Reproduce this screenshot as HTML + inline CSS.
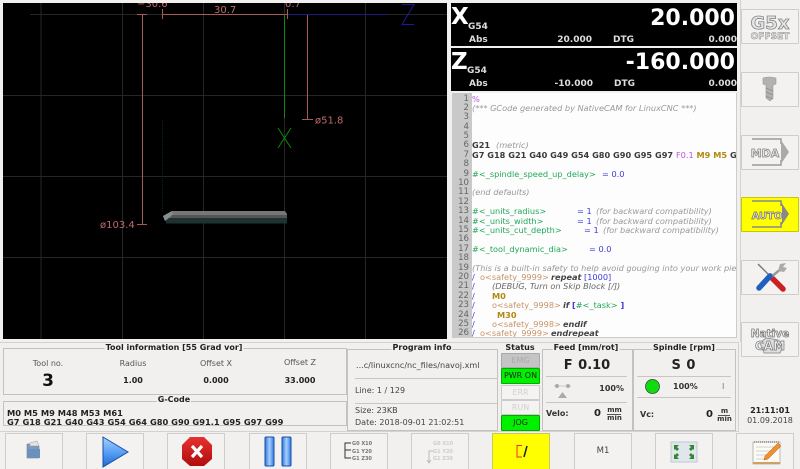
<!DOCTYPE html>
<html><head><meta charset="utf-8"><style>
html,body{margin:0;padding:0}
html{background:#f1f0ef}
body{width:800px;height:469px;overflow:hidden;background:#f1f0ef;position:relative;font-family:"DejaVu Sans","Liberation Sans",sans-serif;color:#222;filter:blur(.3px)}
div,span.a{position:absolute;white-space:nowrap}
.t{line-height:12px;height:12px}
.c{text-align:center}
.r{text-align:right}
.b{font-weight:bold}
.fr{border:1px solid #c4c2c0;box-sizing:border-box}
.ti{background:#f1f0ef;font-weight:bold;font-size:8px;line-height:10px;height:10px;padding:0 1px;color:#222;transform:translateX(-50%)}
.sep{height:1px;background:#c8c6c4}
.btn{border:1px solid #cfcdcb;box-sizing:border-box;background:#f3f2f1;top:433px;width:58px;height:36px;border-bottom:none}
.sb{border:1px solid #cfcdcb;box-sizing:border-box;background:#f3f2f1;left:741px;width:58px;height:35px;border-radius:1px}
.st{left:501px;width:39px;height:15px;box-sizing:border-box;border:1px solid #ccc;background:#f4f3f2;font-size:8px;line-height:14px;text-align:center;color:#d0d0d0;border-radius:1px}
.dro{left:451px;width:286px;height:43px;background:#000;color:#fff}
.dl{font-weight:bold;font-size:9px;line-height:12px;color:#ddd}
.big{font-weight:bold;font-size:22px;line-height:28px}
.l{left:0;width:288px;height:10px;line-height:9.4px;font-size:8.2px;color:#555}
.n{left:-20px;width:17px;text-align:right;color:#666;line-height:9.4px;display:block;position:absolute;font-size:8.6px}
.cm{color:#999;font-style:italic}
.gr{color:#22a85a}
.bl{color:#3c3cd8}
.bd{color:#3a3a3a;font-weight:bold}
.mg{color:#c050e8}
.gd{color:#b08a10;font-weight:bold}
.ta{color:#c89468}
.kw{color:#444;font-weight:bold;font-style:italic}
svg{position:absolute;left:0;top:0;overflow:visible}
</style></head><body>

<div style="left:740px;top:0;width:1px;height:342px;background:#d4d2d0"></div>
<div style="left:0;top:342px;width:739px;height:1px;background:#d4d2d0"></div>
<div style="left:738px;top:342px;width:1px;height:90px;background:#d4d2d0"></div>
<div style="left:0;top:431px;width:739px;height:1px;background:#d4d2d0"></div>

<div style="left:3px;top:3px;width:444px;height:336px;background:#000;overflow:hidden">
<svg width="444" height="336" viewBox="3 3 444 336">
<g stroke="#262626" stroke-width="1" fill="none">
<path d="M41 3V339M122.500 3V339M203.500 3V339M284.500 3V339M365.500 3V339"/>
<path d="M3 95.500H447M3 176.500H447M3 257.500H447M30 14.500H447"/>
</g>
<g stroke="#a65a5a" stroke-width="1" fill="none">
<path d="M142.500 14V224M137 14.500H147M137 224.500H147"/>
<path d="M162.500 9V19M162 14.500H287M287.500 9V19"/>
<path d="M307.500 14V119M302 14.500H313M302 119.500H313"/>
</g>
<g fill="#c06a6a" font-family="'DejaVu Sans',sans-serif" font-size="10">
<text x="214" y="13">30.7</text>
<text x="137" y="7">−30.6</text>
<text x="285" y="7">0.7</text>
<text x="315" y="123.500">ø51.8</text>
<text x="100" y="228">ø103.4</text>
</g>
<path d="M284.500 14V118" stroke="#0c8a0c" stroke-width="1"/>
<path d="M288 14.500H387" stroke="#1a1a80" stroke-width="1"/>
<path d="M402 4.500H414L402 24.500H414" stroke="#1c1c90" fill="none"/>
<path d="M278 128L291 148M291 128L278 148" stroke="#0c8a0c" fill="none"/>
<path d="M162.500 120V212" stroke="#0a2a20" stroke-dasharray="1 1"/>
<path d="M166 217H287V223.500H166Z" fill="#1e3232"/>
<path d="M163 216L172 211H285L287 214V218H169L165 221Z" fill="#777"/>
<path d="M172 215H287V218H170Z" fill="#555"/>
<path d="M163 216L172 211L173 214L165 221Z" fill="#858f8d"/>
</svg>
</div>

<div class="dro" style="top:3px">
<div class="big" style="left:0;top:0;font-size:23px">X</div>
<div class="dl" style="left:17px;top:18px">G54</div>
<div class="big r" style="right:2px;top:1.500px">20.000</div>
<div class="dl" style="left:18px;top:31px">Abs</div>
<div class="dl r" style="right:145px;top:31px">20.000</div>
<div class="dl" style="left:162px;top:31px">DTG</div>
<div class="dl r" style="right:0;top:31px">0.000</div>
</div>
<div class="dro" style="top:48px">
<div class="big" style="left:0;top:0;font-size:23px">Z</div>
<div class="dl" style="left:16px;top:17px">G54</div>
<div class="big r" style="right:2px;top:.5px">-160.000</div>
<div class="dl" style="left:18px;top:30px">Abs</div>
<div class="dl r" style="right:144px;top:30px">-10.000</div>
<div class="dl" style="left:163px;top:30px">DTG</div>
<div class="dl r" style="right:0;top:30px">0.000</div>
</div>

<div style="left:452px;top:93px;width:285px;height:245px;background:#fdfdfd;overflow:hidden;border-right:1px solid #ccc;border-bottom:1px solid #ccc;box-sizing:border-box">
<div style="left:0;top:0;width:20px;height:245px;background:#c9c9c9"></div>
<div style="left:20px;top:0;width:264px;height:245px;overflow:visible">
<div class="l" style="top:1.500px"><span class="n">1</span><span class="mg">%</span></div>
<div class="l" style="top:10.900px"><span class="n">2</span><span class="cm">(*** GCode generated by NativeCAM for LinuxCNC ***)</span></div>
<div class="l" style="top:20.300px"><span class="n">3</span></div>
<div class="l" style="top:29.700px"><span class="n">4</span></div>
<div class="l" style="top:39px"><span class="n">5</span></div>
<div class="l" style="top:48.400px"><span class="n">6</span><span class="bd">G21</span><span class="a cm" style="left:24px">(metric)</span></div>
<div class="l" style="top:57.800px"><span class="n">7</span><span class="bd">G7 G18 G21 G40 G49 G54 G80 G90 G95 G97 </span><span class="mg">F0.1</span><span class="gd"> M9 M5 </span><span class="bd">G</span></div>
<div class="l" style="top:67.200px"><span class="n">8</span></div>
<div class="l" style="top:76.600px"><span class="n">9</span><span class="gr">#&lt;_spindle_speed_up_delay&gt;</span><span class="a bl" style="left:130px">= 0.0</span></div>
<div class="l" style="top:86px"><span class="n">10</span></div>
<div class="l" style="top:95.400px"><span class="n">11</span><span class="cm">(end defaults)</span></div>
<div class="l" style="top:104.800px"><span class="n">12</span></div>
<div class="l" style="top:114.200px"><span class="n">13</span><span class="gr">#&lt;_units_radius&gt;</span><span class="a bl" style="left:105px">= 1</span><span class="a cm" style="left:124px">(for backward compatibility)</span></div>
<div class="l" style="top:123.600px"><span class="n">14</span><span class="gr">#&lt;_units_width&gt;</span><span class="a bl" style="left:105px">= 1</span><span class="a cm" style="left:124px">(for backward compatibility)</span></div>
<div class="l" style="top:133px"><span class="n">15</span><span class="gr">#&lt;_units_cut_depth&gt;</span><span class="a bl" style="left:112px">= 1</span><span class="a cm" style="left:131px">(for backward compatibility)</span></div>
<div class="l" style="top:142.400px"><span class="n">16</span></div>
<div class="l" style="top:151.800px"><span class="n">17</span><span class="gr">#&lt;_tool_dynamic_dia&gt;</span><span class="a bl" style="left:117px">= 0.0</span></div>
<div class="l" style="top:161.200px"><span class="n">18</span></div>
<div class="l" style="top:170.600px"><span class="n">19</span><span class="cm">(This is a built-in safety to help avoid gouging into your work piece</span></div>
<div class="l" style="top:180px"><span class="n">20</span><span class="bl">/</span><span class="a ta" style="left:8px">o&lt;safety_9999&gt;</span><span class="a kw" style="left:79px">repeat</span><span class="a bl" style="left:112px">[1000]</span></div>
<div class="l" style="top:189.400px"><span class="n">21</span><span class="bl">/</span><span class="a cm" style="left:20px;color:#666">(DEBUG, Turn on Skip Block [/])</span></div>
<div class="l" style="top:198.800px"><span class="n">22</span><span class="bl">/</span><span class="a gd" style="left:20px">M0</span></div>
<div class="l" style="top:208.200px"><span class="n">23</span><span class="bl">/</span><span class="a ta" style="left:20px">o&lt;safety_9998&gt;</span><span class="a kw" style="left:91px">if</span><span class="a bl" style="left:100px;font-weight:bold">[<span class="gr" style="font-weight:normal">#&lt;_task&gt;</span> ]</span></div>
<div class="l" style="top:217.600px"><span class="n">24</span><span class="bl">/</span><span class="a gd" style="left:25px">M30</span></div>
<div class="l" style="top:227px"><span class="n">25</span><span class="bl">/</span><span class="a ta" style="left:20px">o&lt;safety_9998&gt;</span><span class="a kw" style="left:91px">endif</span></div>
<div class="l" style="top:236.400px"><span class="n">26</span><span class="bl">/</span><span class="a ta" style="left:8px">o&lt;safety_9999&gt;</span><span class="a kw" style="left:79px">endrepeat</span></div>
</div>
</div>

<div class="sb" style="top:9px"><svg width="56" height="33"><text x="28" y="19" text-anchor="middle" font-family="DejaVu Sans" font-weight="bold" font-size="18" fill="#e4e4e4" stroke="#858585" stroke-width=".8">G5x</text><text x="28" y="29" text-anchor="middle" font-family="DejaVu Sans" font-weight="bold" font-size="9" fill="#e4e4e4" stroke="#8a8a8a" stroke-width=".5">OFFSET</text></svg></div>
<div class="sb" style="top:72px"><svg width="56" height="33"><path d="M21 5Q27 3 34 5L34 11L31 12L31 25L28 28L24 25L24 12L21 11Z" fill="#b2b2b2" stroke="#999" stroke-width=".6"/><path d="M24 15L31 18M24 19L31 22M24 23L31 26" stroke="#8e8e8e" stroke-width=".8"/></svg></div>
<div class="sb" style="top:135px"><svg width="56" height="33"><path d="M10 3H39V29H10" fill="none" stroke="#999" stroke-width="1.500"/><path d="M39 4L47 16L39 28Z" fill="#aaa"/><rect x="9" y="8" width="30" height="16" fill="#f3f2f1"/><text x="23" y="21" text-anchor="middle" font-family="DejaVu Sans" font-weight="bold" font-size="11" fill="#e8e8e8" stroke="#808080" stroke-width=".7">MDA</text></svg></div>
<div class="sb" style="top:197px;background:#ffff00;border:1px solid #c8c800"><svg width="56" height="33"><path d="M10 3H39V29H10" fill="none" stroke="#888" stroke-width="1.500"/><path d="M39 4L47 16L39 28Z" fill="#888"/><rect x="9" y="8" width="31" height="16" fill="#ffff00"/><text x="25" y="21" text-anchor="middle" font-family="DejaVu Sans" font-weight="bold" font-size="10" fill="#e8e8c8" stroke="#707070" stroke-width=".7">AUTO</text></svg></div>
<div class="sb" style="top:260px"><svg width="56" height="33"><path d="M16 3L30 17" stroke="#777" stroke-width="1.500"/><path d="M28 15L41 28" stroke="#cc2020" stroke-width="5.500" stroke-linecap="round"/><path d="M40 7L17 26" stroke="#999" stroke-width="2.500"/><path d="M28 15L17 27" stroke="#1e5fc0" stroke-width="5.500" stroke-linecap="round"/><path d="M38 3L44 2L41 6L45 7L42 11L36 10Z" fill="#aaa"/></svg></div>
<div class="sb" style="top:322px"><svg width="56" height="33"><path d="M18 20L24 15L36 17L42 22L38 30L22 30Z" fill="#ddd" stroke="#999"/><text x="28" y="14" text-anchor="middle" font-family="DejaVu Sans" font-weight="bold" font-size="10.500" fill="#eee" stroke="#777" stroke-width=".7">Native</text><text x="28" y="27" text-anchor="middle" font-family="DejaVu Sans" font-weight="bold" font-size="12" fill="#eee" stroke="#777" stroke-width=".7">CAM</text></svg></div>

<div class="fr" style="left:3px;top:348px;width:344px;height:47px"></div>
<div class="ti" style="left:174px;top:343px">Tool information [55 Grad vor]</div>
<div class="t c" style="left:13px;top:358px;width:70px;font-size:8px;color:#555">Tool no.</div>
<div class="t c" style="left:98px;top:358px;width:70px;font-size:8px;color:#555">Radius</div>
<div class="t c" style="left:181px;top:358px;width:70px;font-size:8px;color:#555">Offset X</div>
<div class="t c" style="left:265px;top:357px;width:70px;font-size:8px;color:#555">Offset Z</div>
<div class="b c" style="left:13px;top:372px;width:70px;font-size:17px;line-height:18px;color:#111">3</div>
<div class="t c b" style="left:98px;top:375px;width:70px;font-size:8px">1.00</div>
<div class="t c b" style="left:181px;top:375px;width:70px;font-size:8px">0.000</div>
<div class="t c b" style="left:265px;top:375px;width:70px;font-size:8px">33.000</div>

<div class="fr" style="left:3px;top:401px;width:344px;height:25px"></div>
<div class="ti" style="left:174px;top:395px">G-Code</div>
<div class="t b" style="left:7px;top:406.500px;font-size:8.300px">M0 M5 M9 M48 M53 M61</div>
<div class="t b" style="left:7px;top:416px;font-size:8.300px">G7 G18 G21 G40 G43 G54 G64 G80 G90 G91.1 G95 G97 G99</div>

<div class="fr" style="left:347px;top:349px;width:151px;height:82px"></div>
<div class="ti" style="left:422px;top:343px">Program info</div>
<div class="t" style="left:356px;top:359px;font-size:8.100px;color:#444">...c/linuxcnc/nc_files/navoj.xml</div>
<div class="sep" style="left:355px;top:378px;width:142px"></div>
<div class="t" style="left:355px;top:385px;font-size:8px;color:#444">Line: 1 / 129</div>
<div class="sep" style="left:355px;top:403px;width:142px"></div>
<div class="t" style="left:355px;top:405px;font-size:8px;color:#444">Size: 23KB</div>
<div class="t" style="left:355px;top:417px;font-size:8px;color:#444">Date: 2018-09-01 21:02:51</div>

<div class="ti" style="left:520px;top:343px">Status</div>
<div class="st" style="top:353px;background:#c4c4c4;color:#aaa;border-color:#aaa">EMG</div>
<div class="st" style="top:368px;height:16px;background:#00f000;color:#222;border-color:#0a0">PWR ON</div>
<div class="st" style="top:385px">ERR</div>
<div class="st" style="top:400px">RUN</div>
<div class="st" style="top:415px;height:16px;background:#00f000;color:#222;border-color:#0a0">JOG</div>

<div class="fr" style="left:542px;top:349px;width:91px;height:82px"></div>
<div class="ti" style="left:586px;top:343px">Feed [mm/rot]</div>
<div class="b c" style="left:542px;top:358px;width:90px;font-size:13px;line-height:16px;word-spacing:1px">F 0.10</div>
<div class="sep" style="left:546px;top:376px;width:81px"></div>
<svg width="800" height="469"><path d="M554 386H571" stroke="#ccc"/><circle cx="557" cy="386" r="2" fill="#aaa"/><circle cx="568" cy="386" r="2" fill="#aaa"/><path d="M558 398L562.500 392L567 398Z" fill="#aaa"/></svg>
<div class="t b r" style="left:590px;top:383px;width:34px;font-size:8px;color:#333">100%</div>
<div class="sep" style="left:546px;top:402px;width:81px"></div>
<div class="t b" style="left:546px;top:408px;font-size:8px;color:#333">Velo:</div>
<div class="b" style="left:594px;top:407px;font-size:10px;line-height:14px">0</div>
<div class="b c" style="left:605px;top:406px;width:19px;font-size:7px;line-height:8px;color:#333">mm<br>min</div>
<div style="left:607px;top:414px;width:14px;height:1px;background:#555"></div>

<div class="fr" style="left:633px;top:349px;width:103px;height:82px"></div>
<div class="ti" style="left:684px;top:343px">Spindle [rpm]</div>
<div class="b c" style="left:633px;top:358px;width:101px;font-size:13px;line-height:16px;word-spacing:1px">S 0</div>
<div class="sep" style="left:637px;top:376px;width:94px"></div>
<svg width="800" height="469"><circle cx="652.500" cy="386.500" r="7" fill="#0fdc0f" stroke="#333" stroke-width=".7"/></svg>
<div class="t b" style="left:673px;top:381px;font-size:8px;color:#333">100%</div>
<div class="t" style="left:722px;top:381px;font-size:8px;color:#777">I</div>
<div class="sep" style="left:637px;top:397px;width:94px"></div>
<div class="t b" style="left:640px;top:409px;font-size:8px;color:#333">Vc:</div>
<div class="b" style="left:706px;top:408px;font-size:10px;line-height:14px">0</div>
<div class="b c" style="left:715px;top:407px;width:19px;font-size:7px;line-height:8px;color:#333">m<br>min</div>
<div style="left:718px;top:415px;width:12px;height:1px;background:#555"></div>

<div class="t b c" style="left:740px;top:405px;width:60px;font-size:8px;color:#222">21:11:01</div>
<div class="t c" style="left:740px;top:415px;width:60px;font-size:8px;color:#444">01.09.2018</div>

<div class="btn" style="left:5px"><svg width="56" height="35"><path d="M21 10H25L27 12H33V24H21Z" fill="#7e9cc0" stroke="#667" stroke-width=".5"/><path d="M24 9L31 7L33 12L24 12Z" fill="#e4e4e4" stroke="#999" stroke-width=".5"/><rect x="21" y="15" width="13" height="9" fill="#6a90bc"/></svg></div>
<div class="btn" style="left:86px"><svg width="56" height="35"><defs><linearGradient id="bg" x1="0" y1="0" x2="0" y2="1"><stop offset="0" stop-color="#a8d0ff"/><stop offset=".5" stop-color="#5aa0f4"/><stop offset="1" stop-color="#1c6cd8"/></linearGradient><linearGradient id="bh" x1="0" y1="0" x2="1" y2="0"><stop offset="0" stop-color="#2a78e0"/><stop offset=".5" stop-color="#a8d0ff"/><stop offset="1" stop-color="#2a78e0"/></linearGradient><linearGradient id="rd" x1="0" y1="0" x2="0" y2="1"><stop offset="0" stop-color="#e83030"/><stop offset="1" stop-color="#b00c0c"/></linearGradient></defs><path d="M16 3L41 18L16 33Z" fill="url(#bg)" stroke="#1a4da8" stroke-width="1"/></svg></div>
<div class="btn" style="left:167px"><svg width="57" height="35"><path d="M22 3H36L44 11V25L36 32H22L14 25V11Z" fill="url(#rd)"/><path d="M24 12L34 23M34 12L24 23" stroke="#fff" stroke-width="3.200"/></svg></div>
<div class="btn" style="left:249px"><svg width="56" height="35"><rect x="15" y="3" width="9" height="29" rx="1" fill="url(#bh)" stroke="#1a4da8"/><rect x="32" y="3" width="9" height="29" rx="1" fill="url(#bh)" stroke="#1a4da8"/></svg></div>
<div class="btn" style="left:330px"><svg width="56" height="35"><path d="M20 9H14V24H20M14 16H20" fill="none" stroke="#333" stroke-width="1"/><text x="21" y="11" font-family="DejaVu Sans" font-size="5" font-weight="bold" fill="#777">G0 X10</text><text x="21" y="19" font-family="DejaVu Sans" font-size="5" font-weight="bold" fill="#777">G1 Y20</text><text x="21" y="26" font-family="DejaVu Sans" font-size="5" font-weight="bold" fill="#777">G1 Z30</text></svg></div>
<div class="btn" style="left:411px"><svg width="56" height="35"><path d="M21 17H17V28M15 26L17 29L19 26" fill="none" stroke="#bbb"/><text x="21" y="11" font-family="DejaVu Sans" font-size="5" font-weight="bold" fill="#ccc">G0 X10</text><text x="21" y="19" font-family="DejaVu Sans" font-size="5" font-weight="bold" fill="#ccc">G1 Y20</text><text x="21" y="26" font-family="DejaVu Sans" font-size="5" font-weight="bold" fill="#ccc">G1 Z30</text></svg></div>
<div class="btn" style="left:492px;background:#ffff00;border-color:#c8c860"><svg width="56" height="35"><path d="M29 11.500H24V23H29" fill="none" stroke="#f03020" stroke-width="1"/><path d="M31 23L34 12" stroke="#222" stroke-width="1.500"/></svg></div>
<div class="btn" style="left:574px"><div class="t c" style="left:0;top:11px;width:56px;font-size:8.500px;color:#444">M1</div></div>
<div class="btn" style="left:655px"><svg width="56" height="35"><rect x="15" y="8" width="26" height="20" fill="#e0e6ec" stroke="#c0c8d0"/><g fill="#2e8a2e"><path d="M18 11H23L21 13L23 15L21 17L19 15L18 16Z"/><path d="M38 11H33L35 13L33 15L35 17L37 15L38 16Z"/><path d="M18 25H23L21 23L23 21L21 19L19 21L18 20Z"/><path d="M38 25H33L35 23L33 21L35 19L37 21L38 20Z"/></g></svg></div>
<div class="btn" style="left:736px"><svg width="57" height="35"><path d="M16 8H43V30H16Z" fill="#fbfaf5" stroke="#aaa" stroke-width=".8"/><path d="M16 30H43L43 28H16Z" fill="#cfa060"/><path d="M19 13H40M19 17H38M19 21H34M19 25H30" stroke="#c4c4c4" stroke-width=".8"/><path d="M17 8H42" stroke="#888" stroke-dasharray="1 1" stroke-width="1.500"/><path d="M28 22L41 9L44 12L31 25L27 26Z" fill="#f09030" stroke="#b06010" stroke-width=".5"/></svg></div>

</body></html>
